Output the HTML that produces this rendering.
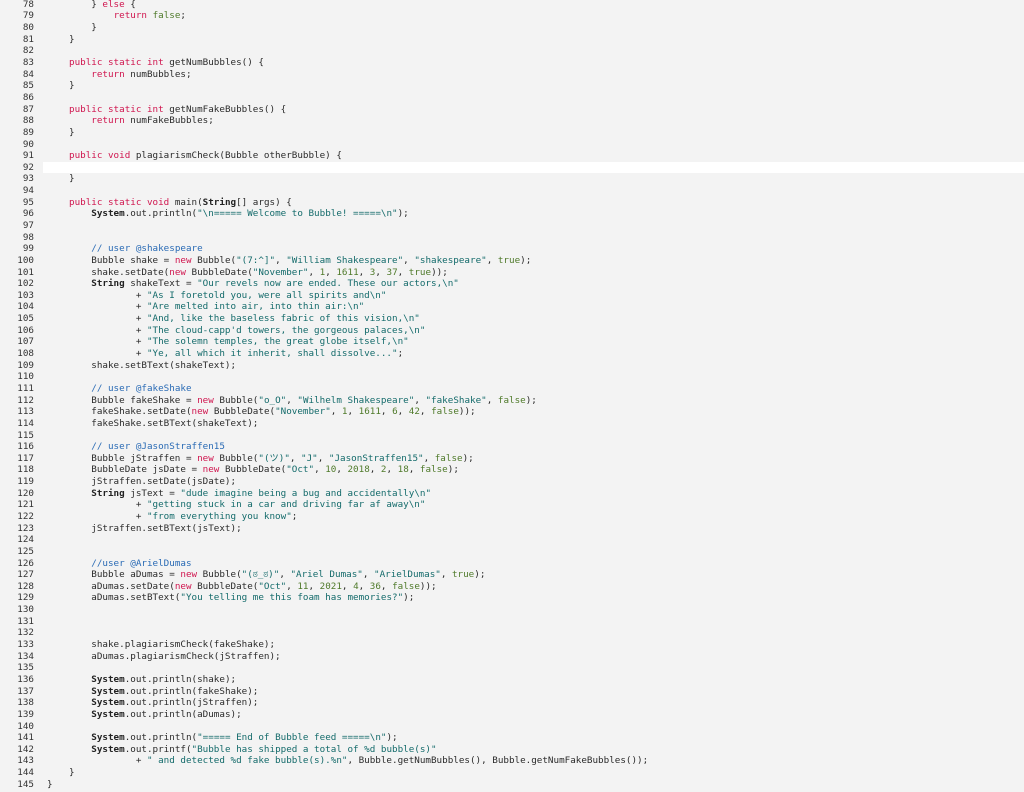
<!DOCTYPE html>
<html><head><meta charset="utf-8"><style>
html,body{margin:0;padding:0;background:#f3f3f3;width:1024px;height:792px;overflow:hidden}
#w{position:absolute;top:-1.2px;left:0;width:1024px}
.l{height:11.65px;line-height:11.65px;white-space:pre;font-family:"DejaVu Sans Mono","Liberation Mono","Noto Sans CJK JP",monospace;font-size:9.25px;color:#2b2b2b;position:relative}
.n{position:absolute;left:0;width:34px;text-align:right;color:#333}
.t{position:absolute;left:69px}
.hl{position:absolute;left:43px;right:0;top:0;height:11.65px;background:#fff}
.k{color:#d0164f}.s{color:#146b6b}.c{color:#2a6bb5}.g{color:#4f7a2a}.b{font-weight:bold;color:#222}
</style></head><body><div id="w">
<div class="l"><span class="n">78</span><span class="t">    } <span class="k">else</span> {</span></div>
<div class="l"><span class="n">79</span><span class="t">        <span class="k">return</span> <span class="g">false</span>;</span></div>
<div class="l"><span class="n">80</span><span class="t">    }</span></div>
<div class="l"><span class="n">81</span><span class="t">}</span></div>
<div class="l"><span class="n">82</span><span class="t"></span></div>
<div class="l"><span class="n">83</span><span class="t"><span class="k">public static int</span> getNumBubbles() {</span></div>
<div class="l"><span class="n">84</span><span class="t">    <span class="k">return</span> numBubbles;</span></div>
<div class="l"><span class="n">85</span><span class="t">}</span></div>
<div class="l"><span class="n">86</span><span class="t"></span></div>
<div class="l"><span class="n">87</span><span class="t"><span class="k">public static int</span> getNumFakeBubbles() {</span></div>
<div class="l"><span class="n">88</span><span class="t">    <span class="k">return</span> numFakeBubbles;</span></div>
<div class="l"><span class="n">89</span><span class="t">}</span></div>
<div class="l"><span class="n">90</span><span class="t"></span></div>
<div class="l"><span class="n">91</span><span class="t"><span class="k">public void</span> plagiarismCheck(Bubble otherBubble) {</span></div>
<div class="l"><div class="hl"></div><span class="n">92</span></div>
<div class="l"><span class="n">93</span><span class="t">}</span></div>
<div class="l"><span class="n">94</span><span class="t"></span></div>
<div class="l"><span class="n">95</span><span class="t"><span class="k">public static void</span> main(<span class="b">String</span>[] args) {</span></div>
<div class="l"><span class="n">96</span><span class="t">    <span class="b">System</span>.out.println(<span class="s">"\n===== Welcome to Bubble! =====\n"</span>);</span></div>
<div class="l"><span class="n">97</span><span class="t"></span></div>
<div class="l"><span class="n">98</span><span class="t"></span></div>
<div class="l"><span class="n">99</span><span class="t">    <span class="c">// user @shakespeare</span></span></div>
<div class="l"><span class="n">100</span><span class="t">    Bubble shake = <span class="k">new</span> Bubble(<span class="s">"(7:^]"</span>, <span class="s">"William Shakespeare"</span>, <span class="s">"shakespeare"</span>, <span class="g">true</span>);</span></div>
<div class="l"><span class="n">101</span><span class="t">    shake.setDate(<span class="k">new</span> BubbleDate(<span class="s">"November"</span>, <span class="g">1</span>, <span class="g">1611</span>, <span class="g">3</span>, <span class="g">37</span>, <span class="g">true</span>));</span></div>
<div class="l"><span class="n">102</span><span class="t">    <span class="b">String</span> shakeText = <span class="s">"Our revels now are ended. These our actors,\n"</span></span></div>
<div class="l"><span class="n">103</span><span class="t">            + <span class="s">"As I foretold you, were all spirits and\n"</span></span></div>
<div class="l"><span class="n">104</span><span class="t">            + <span class="s">"Are melted into air, into thin air:\n"</span></span></div>
<div class="l"><span class="n">105</span><span class="t">            + <span class="s">"And, like the baseless fabric of this vision,\n"</span></span></div>
<div class="l"><span class="n">106</span><span class="t">            + <span class="s">"The cloud-capp'd towers, the gorgeous palaces,\n"</span></span></div>
<div class="l"><span class="n">107</span><span class="t">            + <span class="s">"The solemn temples, the great globe itself,\n"</span></span></div>
<div class="l"><span class="n">108</span><span class="t">            + <span class="s">"Ye, all which it inherit, shall dissolve..."</span>;</span></div>
<div class="l"><span class="n">109</span><span class="t">    shake.setBText(shakeText);</span></div>
<div class="l"><span class="n">110</span><span class="t"></span></div>
<div class="l"><span class="n">111</span><span class="t">    <span class="c">// user @fakeShake</span></span></div>
<div class="l"><span class="n">112</span><span class="t">    Bubble fakeShake = <span class="k">new</span> Bubble(<span class="s">"o_O"</span>, <span class="s">"Wilhelm Shakespeare"</span>, <span class="s">"fakeShake"</span>, <span class="g">false</span>);</span></div>
<div class="l"><span class="n">113</span><span class="t">    fakeShake.setDate(<span class="k">new</span> BubbleDate(<span class="s">"November"</span>, <span class="g">1</span>, <span class="g">1611</span>, <span class="g">6</span>, <span class="g">42</span>, <span class="g">false</span>));</span></div>
<div class="l"><span class="n">114</span><span class="t">    fakeShake.setBText(shakeText);</span></div>
<div class="l"><span class="n">115</span><span class="t"></span></div>
<div class="l"><span class="n">116</span><span class="t">    <span class="c">// user @JasonStraffen15</span></span></div>
<div class="l"><span class="n">117</span><span class="t">    Bubble jStraffen = <span class="k">new</span> Bubble(<span class="s">"(ツ)"</span>, <span class="s">"J"</span>, <span class="s">"JasonStraffen15"</span>, <span class="g">false</span>);</span></div>
<div class="l"><span class="n">118</span><span class="t">    BubbleDate jsDate = <span class="k">new</span> BubbleDate(<span class="s">"Oct"</span>, <span class="g">10</span>, <span class="g">2018</span>, <span class="g">2</span>, <span class="g">18</span>, <span class="g">false</span>);</span></div>
<div class="l"><span class="n">119</span><span class="t">    jStraffen.setDate(jsDate);</span></div>
<div class="l"><span class="n">120</span><span class="t">    <span class="b">String</span> jsText = <span class="s">"dude imagine being a bug and accidentally\n"</span></span></div>
<div class="l"><span class="n">121</span><span class="t">            + <span class="s">"getting stuck in a car and driving far af away\n"</span></span></div>
<div class="l"><span class="n">122</span><span class="t">            + <span class="s">"from everything you know"</span>;</span></div>
<div class="l"><span class="n">123</span><span class="t">    jStraffen.setBText(jsText);</span></div>
<div class="l"><span class="n">124</span><span class="t"></span></div>
<div class="l"><span class="n">125</span><span class="t"></span></div>
<div class="l"><span class="n">126</span><span class="t">    <span class="c">//user @ArielDumas</span></span></div>
<div class="l"><span class="n">127</span><span class="t">    Bubble aDumas = <span class="k">new</span> Bubble(<span class="s">"(ಠ_ಠ)"</span>, <span class="s">"Ariel Dumas"</span>, <span class="s">"ArielDumas"</span>, <span class="g">true</span>);</span></div>
<div class="l"><span class="n">128</span><span class="t">    aDumas.setDate(<span class="k">new</span> BubbleDate(<span class="s">"Oct"</span>, <span class="g">11</span>, <span class="g">2021</span>, <span class="g">4</span>, <span class="g">36</span>, <span class="g">false</span>));</span></div>
<div class="l"><span class="n">129</span><span class="t">    aDumas.setBText(<span class="s">"You telling me this foam has memories?"</span>);</span></div>
<div class="l"><span class="n">130</span><span class="t"></span></div>
<div class="l"><span class="n">131</span><span class="t"></span></div>
<div class="l"><span class="n">132</span><span class="t"></span></div>
<div class="l"><span class="n">133</span><span class="t">    shake.plagiarismCheck(fakeShake);</span></div>
<div class="l"><span class="n">134</span><span class="t">    aDumas.plagiarismCheck(jStraffen);</span></div>
<div class="l"><span class="n">135</span><span class="t"></span></div>
<div class="l"><span class="n">136</span><span class="t">    <span class="b">System</span>.out.println(shake);</span></div>
<div class="l"><span class="n">137</span><span class="t">    <span class="b">System</span>.out.println(fakeShake);</span></div>
<div class="l"><span class="n">138</span><span class="t">    <span class="b">System</span>.out.println(jStraffen);</span></div>
<div class="l"><span class="n">139</span><span class="t">    <span class="b">System</span>.out.println(aDumas);</span></div>
<div class="l"><span class="n">140</span><span class="t"></span></div>
<div class="l"><span class="n">141</span><span class="t">    <span class="b">System</span>.out.println(<span class="s">"===== End of Bubble feed =====\n"</span>);</span></div>
<div class="l"><span class="n">142</span><span class="t">    <span class="b">System</span>.out.printf(<span class="s">"Bubble has shipped a total of %d bubble(s)"</span></span></div>
<div class="l"><span class="n">143</span><span class="t">            + <span class="s">" and detected %d fake bubble(s).%n"</span>, Bubble.getNumBubbles(), Bubble.getNumFakeBubbles());</span></div>
<div class="l"><span class="n">144</span><span class="t">}</span></div>
<div class="l"><span class="n">145</span><span class="t" style="left:47px">}</span></div>
</div></body></html>
